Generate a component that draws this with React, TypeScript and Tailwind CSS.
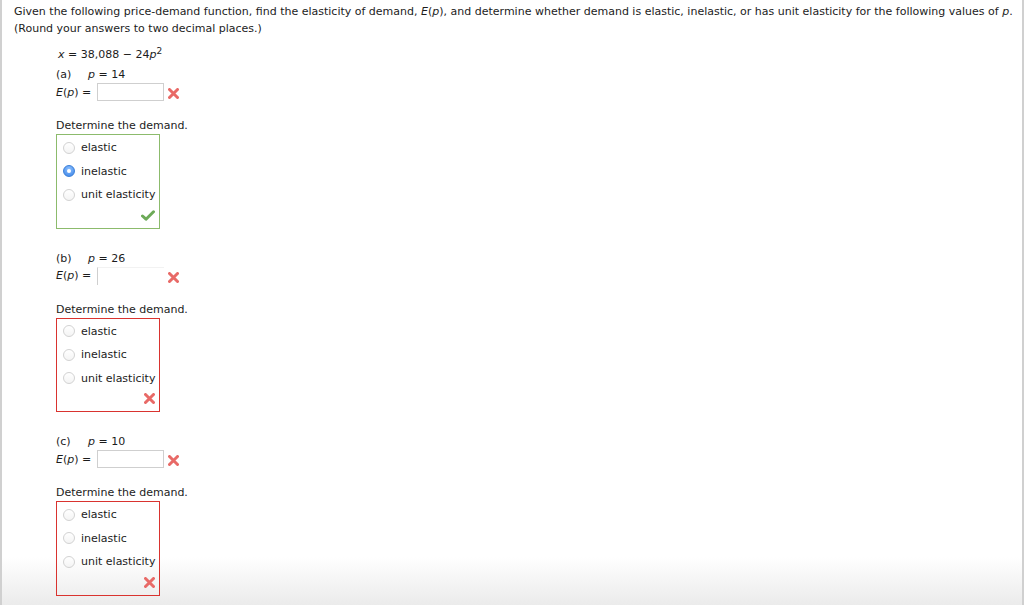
import React from "react";

const font = { fontFamily: '"DejaVu Sans", Verdana, sans-serif' };

function XMark() {
  return (
    <svg width="11" height="11" viewBox="0 0 11 11" className="block">
      <path d="M1.5 1.5 L9.5 9.5 M9.5 1.5 L1.5 9.5" stroke="#e86a67" strokeWidth="3" strokeLinecap="round" />
    </svg>
  );
}

function Check() {
  return (
    <svg width="14" height="11" viewBox="0 0 14 11" className="block">
      <path d="M1.5 6 L5 9.2 L12.5 1.8" stroke="#6daa58" strokeWidth="3" fill="none" strokeLinecap="round" strokeLinejoin="round" />
    </svg>
  );
}

function Radio({ checked }: { checked?: boolean }) {
  if (checked) {
    return (
      <span className="flex h-[12px] w-[12px] items-center justify-center rounded-full border border-[#3a7fd8] bg-[radial-gradient(circle_at_50%_30%,#8cc0ff,#3b83e6)]">
        <span className="h-[4px] w-[4px] rounded-full bg-white" />
      </span>
    );
  }
  return <span className="block h-[12px] w-[12px] rounded-full border border-[#d2d2d2] bg-[linear-gradient(#ffffff,#f4f4f4)]" />;
}

function Ep({ full = true }: { full?: boolean }) {
  return (
    <div className="flex h-[18px] items-center">
      <span>
        <i>E</i>(<i>p</i>) =
      </span>
      <span
        className={
          full
            ? "ml-[6px] h-[18px] w-[67px] border border-[#cfcfcf] bg-white"
            : "ml-[6px] h-[18px] w-[67px] border-l border-t border-l-[#cfcfcf] border-t-[#f2f2f2] bg-white"
        }
      />
      <span className="ml-[4px] mt-[3px]">
        <XMark />
      </span>
    </div>
  );
}

function Choice({ correct, selected }: { correct: boolean; selected?: number }) {
  const labels = ["elastic", "inelastic", "unit elasticity"];
  return (
    <div className="flex">
      <div
        className={
          "w-fit border pb-[7px] pr-[4px] pt-[1px] " + (correct ? "border-[#8cbb6c]" : "border-[#d9332f]")
        }
      >
        {labels.map((l, i) => (
          <div key={l} className="flex h-[23.5px] items-center pl-[6px]">
            <Radio checked={selected === i} />
            <span className="ml-[6px] whitespace-nowrap">{l}</span>
          </div>
        ))}
        <div className="flex justify-end pt-[3px]">{correct ? <Check /> : <XMark />}</div>
      </div>
    </div>
  );
}

function Part({
  letter,
  p,
  correct,
  selected,
  full = true,
}: {
  letter: string;
  p: string;
  correct: boolean;
  selected?: number;
  full?: boolean;
}) {
  return (
    <div className="pl-[42px]">
      <div className="flex h-[17px] items-center">
        <span className="w-[32px]">({letter})</span>
        <span>
          <i>p</i> = {p}
        </span>
      </div>
      <Ep full={full} />
      <div className="mt-[16px] h-[17px] leading-[17px]">Determine the demand.</div>
      <Choice correct={correct} selected={selected} />
    </div>
  );
}

export default function App() {
  return (
    <div
      style={font}
      className="min-h-[605px] w-[1024px] border-x-2 border-[#d0d0d0] bg-[linear-gradient(to_bottom,#ffffff_0%,#ffffff_92%,#ebebeb_100%)] pl-[12px] text-[11px] leading-[17px] text-[#1c1c1c]"
    >
      <div className="pt-[3px]">
        Given the following price-demand function, find the elasticity of demand, <i>E</i>(<i>p</i>), and determine whether
        demand is elastic, inelastic, or has unit elasticity for the following values of <i>p</i>.
      </div>
      <div>(Round your answers to two decimal places.)</div>
      <div className="mt-[9px] pl-[44px]">
        <i>x</i> = 38,088 − 24<i>p</i>
        <sup className="text-[9px]">2</sup>
      </div>
      <div className="mt-[3px] flex flex-col gap-[21px]">
        <Part letter="a" p="14" correct={true} selected={1} />
        <Part letter="b" p="26" correct={false} full={false} />
        <Part letter="c" p="10" correct={false} />
      </div>
    </div>
  );
}
